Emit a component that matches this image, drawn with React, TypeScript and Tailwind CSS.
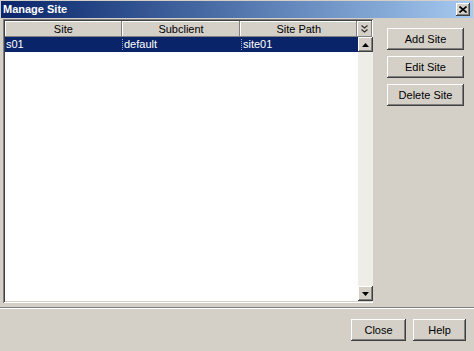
import React from 'react'

const raised =
  'shadow-[inset_-1px_-1px_#404040,inset_1px_1px_#ffffff,inset_-2px_-2px_#808080,inset_2px_2px_#d4d0c8]'
const cell = 'shadow-[inset_-1px_-1px_#808080,inset_1px_1px_#ffffff]'

function Btn({ label, w }: { label: string; w: string }) {
  return (
    <button className={`${w} h-[22px] bg-[#d4d0c8] ${raised} text-[11px] text-black flex items-center justify-center`}>
      {label}
    </button>
  )
}

function Arrow({ up }: { up?: boolean }) {
  return (
    <div className={`w-[15px] h-[15px] bg-[#d4d0c8] ${raised} flex items-center justify-center`}>
      <svg width="7" height="4" viewBox="0 0 7 4">
        {up ? <path d="M3.5 0 L7 4 L0 4 Z" fill="#000" /> : <path d="M0 0 L7 0 L3.5 4 Z" fill="#000" />}
      </svg>
    </div>
  )
}

export default function App() {
  const cols = [
    { name: 'Site', w: 'w-[117px]' },
    { name: 'Subclient', w: 'w-[119px]' },
    { name: 'Site Path', w: 'w-[117px]' },
  ]
  const row = ['s01', 'default', 'site01']

  return (
    <div className="w-[474px] h-[351px] bg-[#d4d0c8] flex flex-col font-['Liberation_Sans',Arial,sans-serif] text-[11px] overflow-hidden">
      {/* Title bar */}
      <div className="mt-px mx-px h-[19px] bg-gradient-to-r from-[#0a246a] to-[#a6caf0] flex items-center justify-between pl-[2px] pr-[3px]">
        <span className="text-white font-bold text-[11px]">Manage Site</span>
        <div className={`w-[14px] h-[13px] bg-[#d4d0c8] ${raised} flex items-center justify-center`}>
          <svg width="8" height="7" viewBox="0 0 8 7">
            <path d="M0.5 0.5 L7.5 6.5 M7.5 0.5 L0.5 6.5" stroke="#000" strokeWidth="1.6" />
          </svg>
        </div>
      </div>

      <div className="flex flex-1">
        {/* Table */}
        <div className="ml-[3px] mt-[1px] w-[370px] h-[284px] bg-white p-px shadow-[inset_1px_1px_#808080,inset_-1px_-1px_#ffffff,inset_2px_2px_#404040,inset_-2px_-2px_#d4d0c8] flex flex-col">
          <div className="flex h-[16px] ml-px mt-px">
            {cols.map(c => (
              <div key={c.name} className={`${c.w} bg-[#d4d0c8] ${cell} flex items-center justify-center`}>
                {c.name}
              </div>
            ))}
            <div className={`w-[15px] bg-[#d4d0c8] ${cell} flex items-center justify-center`}>
              <svg width="7" height="8" viewBox="0 0 7 8">
                <path d="M0.5 0.5 L3.5 3 L6.5 0.5 M0.5 4.5 L3.5 7 L6.5 4.5" stroke="#303030" strokeWidth="1.2" fill="none" />
              </svg>
            </div>
          </div>
          <div className="flex flex-1 ml-px mb-px">
            <div className="flex-1">
              <div className="flex h-[15px] bg-[#0a246a] text-white items-center">
                {row.map((v, i) => (
                  <div key={i} className={`${cols[i].w} pl-px leading-none ${i > 0 ? 'border-l border-dotted border-[#a0a0c0]' : ''}`}>
                    {v}
                  </div>
                ))}
              </div>
            </div>
            <div className="w-[15px] bg-[#eeede8] flex flex-col justify-between">
              <Arrow up />
              <Arrow />
            </div>
          </div>
        </div>

        {/* Side buttons */}
        <div className="ml-[14px] mt-[10px] flex flex-col gap-[6px]">
          <Btn label="Add Site" w="w-[77px]" />
          <Btn label="Edit Site" w="w-[77px]" />
          <Btn label="Delete Site" w="w-[77px]" />
        </div>
      </div>

      {/* Separator */}
      <div className="mt-[4px] h-[2px] border-t border-[#808080] border-b border-b-white" />

      <div className="flex justify-end gap-[7px] pr-[8px] pt-[10px] pb-[10px]">
        <Btn label="Close" w="w-[55px]" />
        <Btn label="Help" w="w-[53px]" />
      </div>
    </div>
  )
}
